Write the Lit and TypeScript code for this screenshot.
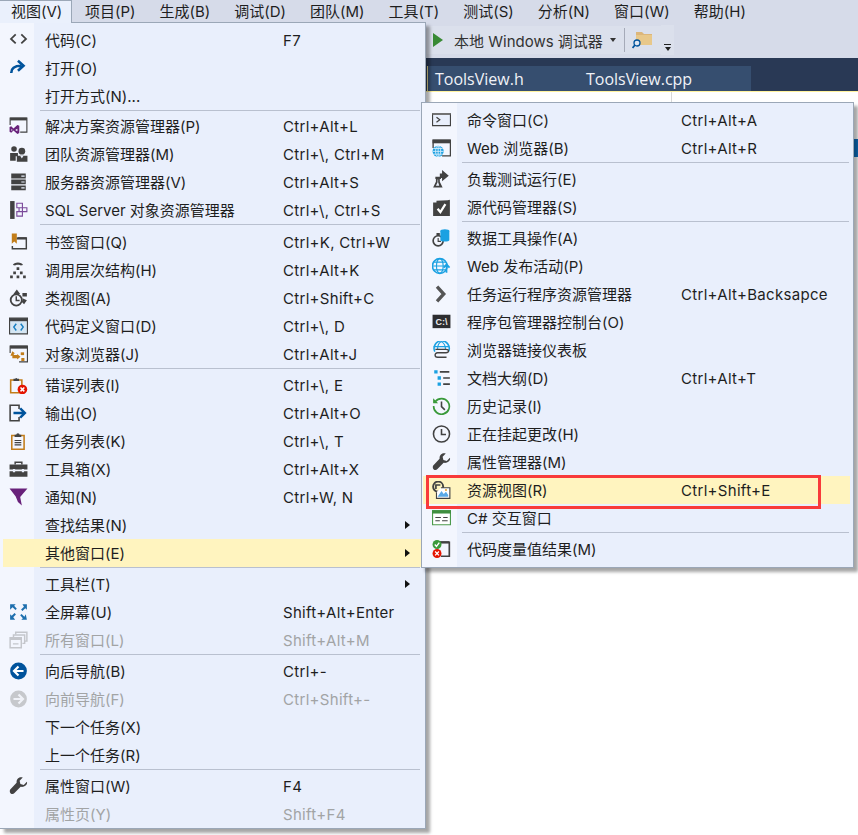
import { LitElement, html, css, svg, nothing } from "lit";
import { customElement } from "lit/decorators.js";

const G = "#424242";
const icons: Record<string, any> = {
  code: svg`<path d="M6 3 1.800 7 6 11M11 3l4.200 4L11 11" fill="none" stroke="${G}" stroke-width="1.600"/>`,
  open: svg`<path d="M2 12.500C2 8 5 6 11 6M8 1.500l5 4.500-5 4.500" fill="none" stroke="#00539c" stroke-width="2.300"/>`,
  sln: svg`<path d="M1 7V1h15v12.500h-6" fill="none" stroke="${G}" stroke-width="1"/><path d="M1 .5h15v2.500H1z" fill="${G}"/><path d="M.5 9 2 8.200l2 2 3.500-3.200 1.700.8v6.500l-1.700.8L4 12l-2 2-1.500-.8zm1.700 1.500v2.200l1-1.100zm5.300 0-2 1.100 2 1.100z" fill="#68217a"/>`,
  team: svg`<circle cx="4.500" cy="3.500" r="2.500" fill="${G}"/><circle cx="11.500" cy="5.500" r="3" fill="${G}"/><path d="M1 7h7v3H6v4H1zM7 9.500h9.500V15H7z" fill="${G}"/><path d="M10 9.500h3l-1.500 2.500z" fill="#e9effc"/>`,
  server: svg`<path d="M2 .5h13v4.300H2zM2 5.800h13v4.300H2zM2 11.100h13v4.300H2z" fill="${G}"/><path d="M11 2.700h3M11 8h3M11 13.300h3" stroke="#e9effc"/>`,
  sql: svg`<path d="M1 0h4v16H1z" fill="${G}"/><path d="M7 2h5v4H7zM7 9.500h5v4H7zM12 6h4v3.500h-4zM9 6v3.500" fill="none" stroke="#7b4a9a"/>`,
  bookmark: svg`<path d="M2.500 .5h4.500v9L4.700 7.500 2.500 9.500z" fill="#c27d1a"/><path d="M8 4.500h7.500V14H3v-2.500" fill="none" stroke="${G}" stroke-width="1.300"/><path d="M7 3.800h8.500v2H7z" fill="${G}"/>`,
  hier: svg`<path d="M3.500 3.500C4 .5 12 .5 12.500 3.500l-2 .5c0-1-5-1-5 0z" fill="${G}"/><path d="M6.800 5.500h2.400v2.400H6.800zM3.800 9.300h2.400v2.400H3.800zM9.800 9.300h2.400v2.400H9.800zM1 13h2.400v2.400H1zM6.800 13h2.400v2.400H6.800zM12.600 13H15v2.400h-2.400z" fill="${G}"/>`,
  classv: svg`<circle cx="6.500" cy="9.800" r="5" fill="none" stroke="${G}" stroke-width="1.600"/><path d="M6.500 6.500v3.700h3" fill="none" stroke="${G}" stroke-width="1.300"/><path d="m4 4.500 3-4 3 4zM12 3.500h4v3.200h-4zM12.500 8.500l3.500 1.500-2.500 3.500-2-2z" fill="${G}"/>`,
  def: svg`<path d="M.5 1h16v14H.5z" fill="#d5e6f3" stroke="${G}"/><path d="M.5 1h16v2.700H.5z" fill="${G}"/><path d="M6.500 6 4.300 9l2.200 3M10.500 6l2.200 3-2.200 3" fill="none" stroke="#1a7fc1" stroke-width="1.300"/>`,
  obj: svg`<path d="M1 7V1h15.500v14H9" fill="none" stroke="${G}"/><path d="M1 .5h15.500v2.700H1z" fill="${G}"/><path d="m3 5.500 2.500 2H4.300V9h3V8l3 2.500-3 2.500v-1.300H3V9.500H1.300zM11 11.500h2.800v2.800H11z" fill="#c27d1a"/><path d="M10.500 6.500h3v2.500h-3z" fill="#c27d1a"/>`,
  errlist: svg`<path d="M1.500 3.500h10v11.500h-10z" fill="none" stroke="#c27d1a" stroke-width="1.400"/><path d="M4 4.500V2.500h1.500a1.200 1.200 0 0 1 2 0H9v2z" fill="${G}"/><circle cx="12" cy="12" r="4.300" fill="#e41400"/><path d="m10.300 10.300 3.400 3.400m0-3.400-3.400 3.400" stroke="#fff" stroke-width="1.300"/>`,
  output: svg`<path d="M9 4.500V1H1v14h8v-3.500" fill="none" stroke="${G}" stroke-width="1.400"/><path d="M4 8h10M10 3.800 14.200 8 10 12.200" fill="none" stroke="#00539c" stroke-width="2.200"/>`,
  task: svg`<path d="M2.500 3h11v12.500h-11z" fill="none" stroke="#c27d1a" stroke-width="1.400"/><path d="M5 4.500V2.500h1.500a1.500 1.500 0 0 1 3 0H11v2z" fill="${G}"/><path d="M5 7.500h6M5 9.500h6M5 11.500h6" stroke="${G}"/>`,
  box: svg`<path d="M5.500 4V2h6v2" fill="none" stroke="${G}" stroke-width="1.300"/><path d="M.5 4h16v4.500H.5zM.5 10h16v5H.5z" fill="${G}"/><path d="M3.500 8h2v3h-2zM11.500 8h2v3h-2z" fill="#e9effc"/>`,
  filter: svg`<path d="M.5 .5h16L10 8l1.500 7.500L8 12.500 6 7.500z" fill="#68217a"/>`,
  full: svg`<path d="M1 1h5L4.600 2.400 7 5 5.800 6.200 3.200 3.800 1.800 5.200 1 6zM16 1v5l-1.400-1.400L12 7 10.800 5.800l2.600-2.600L12 1zM1 15v-5l1.400 1.400L5 9l1.200 1.200-2.400 2.600L5.500 15zM16 15h-5l1.400-1.400L10 11l1.200-1.200 2.600 2.400L15 10z" fill="#1d6fae"/>`,
  allwin: svg`<g fill="none" stroke="#c4c6cb" stroke-width="1.300"><path d="M6 3V1h10v8h-2"/><path d="M4 6V3.500h10V11h-2"/><path d="M1 6h10v9H1z"/></g><path d="M1 6h10v2H1zM3.500 11h5v1h-5z" fill="#c4c6cb"/>`,
  back: svg`<circle cx="8.500" cy="8" r="7.500" fill="#00539c"/><path d="M8.500 4 4.500 8l4 4M5 8h8" fill="none" stroke="#fff" stroke-width="2"/>`,
  fwd: svg`<circle cx="8.500" cy="8" r="7.500" fill="#c6c8cc"/><path d="m8.500 4 4 4-4 4M12 8H4" fill="none" stroke="#f0f2f8" stroke-width="2"/>`,
  wrench: svg`<path d="M16 4.200 13.200 7l-3-.8-.7-3L12.300.5C9.500 -.4 6.500 1.500 6.800 5.200L1.300 11c-1.300 1.500-.3 3.800 1.200 4.200 1 .2 1.700-.2 2.400-.9l5.500-5.600c3.700.7 6.500-2 5.600-4.500z" fill="${G}"/>`,
  cmd: svg`<path d="M.5 2.500h16v10.500H.5z" fill="#e9effc" stroke="${G}"/><path d="M.5 2h16v1.500H.5z" fill="#737373"/><path d="m4 5.500 3 2.300-3 2.300" fill="none" stroke="${G}" stroke-width="1.100"/>`,
  web: svg`<path d="M1 8V1h15.500v14H9" fill="none" stroke="${G}" stroke-width="1.200"/><path d="M.5 .5h16v3.300H.5z" fill="${G}"/><circle cx="5.500" cy="11" r="5" fill="#1ba1e2"/><path d="M.5 11h10M5.500 6v10M1.500 8.500h8M1.500 13.500h8" stroke="#d8ecfa" stroke-width=".8" fill="none"/><ellipse cx="5.500" cy="11" rx="2.300" ry="5" fill="none" stroke="#d8ecfa" stroke-width=".8"/>`,
  load: svg`<path d="M9 0 15 5l-6 5V7H7V3h2z" fill="${G}"/><path d="M3 6h5v2H7v2.500l2.500 5H1l2.500-5V8H3z" fill="${G}"/><path d="M5 8.500v2.500l-1.500 3h3L5.500 11V8.500z" fill="#e9effc"/>`,
  src: svg`<path d="M1 4h3V2.500L14 2l2-.5V16H1z" fill="${G}"/><path d="M5 9.500 7.500 12.500 12 5.500" fill="none" stroke="#fff" stroke-width="2"/>`,
  data: svg`<circle cx="5.500" cy="10.500" r="4.500" fill="none" stroke="${G}" stroke-width="1.500"/><path d="M5.500 8v3h2.500" fill="none" stroke="${G}"/><path d="M4 3.500h3V6H4z" fill="${G}"/><path d="M7.500 1.500h8V10c0 1.500-8 1.500-8 0z" fill="#1ba1e2"/><ellipse cx="11.500" cy="1.700" rx="4" ry="1.500" fill="#1ba1e2"/>`,
  pub: svg`<circle cx="7" cy="8" r="6.600" fill="none" stroke="#1ba1e2" stroke-width="1.400"/><ellipse cx="7" cy="8" rx="3" ry="6.600" fill="none" stroke="#1ba1e2"/><path d="M0 8h14M1.500 4.500h11M1.500 11.500h11" stroke="#1ba1e2"/><path d="M13 14V7.500M10.500 9.500l2.500-3 2.700 3" fill="none" stroke="#1ba1e2" stroke-width="1.500"/>`,
  chev: svg`<path d="m4.500 1.500 6 6.500-6 6.500" fill="none" stroke="#555" stroke-width="3"/>`,
  con: svg`<path d="M.5 1.500h16v12H.5z" fill="#2d2d30"/><text x="8.500" y="10.500" font-size="8" font-weight="700" font-family="Liberation Sans" fill="#eee" text-anchor="middle">C:\\</text>`,
  link: svg`<path d="M2.500 9.500a6.800 6.800 0 1 1 12.500-.5" fill="none" stroke="#1ba1e2" stroke-width="1.400"/><path d="M5 7c0-3 1.500-5.500 3.500-6.500C11 2 12 4.500 12 7M1.500 5h13.500" fill="none" stroke="#1ba1e2"/><path d="M3 7.500h9.500c3 0 3 3 0 3H5c-3 0-3 4 0 4h8" fill="none" stroke="#424242" stroke-width="1.200"/>`,
  outline: svg`<path d="M2 1h3v3H2zM5 6.500h3v3H5zM5 12h3v3H5z" fill="#1ba1e2"/><path d="M7 2.500h8.500M10 8h6M10 13.500h6" stroke="${G}" stroke-width="1.500"/>`,
  hist: svg`<path d="M3 4A7 7 0 1 1 1.500 8" fill="none" stroke="#3a9a3a" stroke-width="1.500"/><path d="M1 1v4.500h4.500z" fill="#3a9a3a"/><path d="M8.500 4v4.500l3 3" fill="none" stroke="${G}" stroke-width="1.400"/>`,
  clock: svg`<circle cx="8.500" cy="8" r="7.200" fill="none" stroke="${G}" stroke-width="1.400"/><path d="M8.500 3.500V8.500h4" fill="none" stroke="${G}" stroke-width="1.400"/>`,
  res: svg`<circle cx="5.500" cy="5" r="4.500" fill="none" stroke="${G}" stroke-width="1.700"/><path d="M3.500 7V3.500h4" fill="none" stroke="${G}" stroke-width="1.500"/><path d="M8 6h8v9.500H4V10" fill="#fff" stroke="${G}"/><path d="m5 14 3.500-5 2 2.500 2-2 2 3v1.500z" fill="#5aa9e6"/><circle cx="12.500" cy="8" r="1" fill="#e7a83c"/>`,
  csharp: svg`<path d="M.5 1.500h16v12.500H.5z" fill="#fff" stroke="#4c9a4c"/><path d="M0 1h17v3H0z" fill="#3f8f3f"/><path d="M3 7.500h5M10 7.500h4M3 10.500h4M9 10.500h5" stroke="${G}"/>`,
  metric: svg`<path d="M6 2h9.500v12.500H8" fill="none" stroke="${G}" stroke-width="1.500"/><path d="M6 1h9.500v2H6z" fill="${G}"/><circle cx="4.500" cy="4" r="4" fill="#3a9a3a"/><path d="m2.500 4 1.500 1.700 2.500-3.500" fill="none" stroke="#fff" stroke-width="1.200"/><circle cx="4.500" cy="12" r="4" fill="#e41400"/><path d="m2.800 10.300 3.400 3.400m0-3.400-3.400 3.400" stroke="#fff" stroke-width="1.200"/>`,
};

type Row = { t: string; k?: string; i?: string; d?: boolean; a?: boolean; h?: boolean } | "-";

const mainMenu: Row[] = [
  { t: "代码(C)", k: "F7", i: "code" },
  { t: "打开(O)", i: "open" },
  { t: "打开方式(N)..." },
  "-",
  { t: "解决方案资源管理器(P)", k: "Ctrl+Alt+L", i: "sln" },
  { t: "团队资源管理器(M)", k: "Ctrl+\\, Ctrl+M", i: "team" },
  { t: "服务器资源管理器(V)", k: "Ctrl+Alt+S", i: "server" },
  { t: "SQL Server 对象资源管理器", k: "Ctrl+\\, Ctrl+S", i: "sql" },
  "-",
  { t: "书签窗口(Q)", k: "Ctrl+K, Ctrl+W", i: "bookmark" },
  { t: "调用层次结构(H)", k: "Ctrl+Alt+K", i: "hier" },
  { t: "类视图(A)", k: "Ctrl+Shift+C", i: "classv" },
  { t: "代码定义窗口(D)", k: "Ctrl+\\, D", i: "def" },
  { t: "对象浏览器(J)", k: "Ctrl+Alt+J", i: "obj" },
  "-",
  { t: "错误列表(I)", k: "Ctrl+\\, E", i: "errlist" },
  { t: "输出(O)", k: "Ctrl+Alt+O", i: "output" },
  { t: "任务列表(K)", k: "Ctrl+\\, T", i: "task" },
  { t: "工具箱(X)", k: "Ctrl+Alt+X", i: "box" },
  { t: "通知(N)", k: "Ctrl+W, N", i: "filter" },
  { t: "查找结果(N)", a: true },
  { t: "其他窗口(E)", a: true, h: true },
  "-",
  { t: "工具栏(T)", a: true },
  { t: "全屏幕(U)", k: "Shift+Alt+Enter", i: "full" },
  { t: "所有窗口(L)", k: "Shift+Alt+M", i: "allwin", d: true },
  "-",
  { t: "向后导航(B)", k: "Ctrl+-", i: "back" },
  { t: "向前导航(F)", k: "Ctrl+Shift+-", i: "fwd", d: true },
  { t: "下一个任务(X)" },
  { t: "上一个任务(R)" },
  "-",
  { t: "属性窗口(W)", k: "F4", i: "wrench" },
  { t: "属性页(Y)", k: "Shift+F4", d: true },
];

const subMenu: Row[] = [
  { t: "命令窗口(C)", k: "Ctrl+Alt+A", i: "cmd" },
  { t: "Web 浏览器(B)", k: "Ctrl+Alt+R", i: "web" },
  "-",
  { t: "负载测试运行(E)", i: "load" },
  { t: "源代码管理器(S)", i: "src" },
  "-",
  { t: "数据工具操作(A)", i: "data" },
  { t: "Web 发布活动(P)", i: "pub" },
  { t: "任务运行程序资源管理器", k: "Ctrl+Alt+Backsapce", i: "chev" },
  { t: "程序包管理器控制台(O)", i: "con" },
  { t: "浏览器链接仪表板", i: "link" },
  { t: "文档大纲(D)", k: "Ctrl+Alt+T", i: "outline" },
  { t: "历史记录(I)", i: "hist" },
  { t: "正在挂起更改(H)", i: "clock" },
  { t: "属性管理器(M)", i: "wrench" },
  { t: "资源视图(R)", k: "Ctrl+Shift+E", i: "res", h: true },
  { t: "C# 交互窗口", i: "csharp" },
  "-",
  { t: "代码度量值结果(M)", i: "metric" },
];

const bar = ["视图(V)", "项目(P)", "生成(B)", "调试(D)", "团队(M)", "工具(T)", "测试(S)", "分析(N)", "窗口(W)", "帮助(H)"];

const row = (r: Row) =>
  r === "-"
    ? html`<div class="sep"></div>`
    : html`<div class="row ${r.h ? "hi" : ""} ${r.d ? "dis" : ""}">
        <span class="ic">${r.i ? html`<svg width="19" height="18" viewBox="0 0 17 16">${icons[r.i]}</svg>` : nothing}</span>
        <span class="lb">${r.t}</span>
        <span class="key">${r.k ?? ""}</span>
        ${r.a ? html`<span class="arrow"></span>` : nothing}
      </div>`;

@customElement("app-root")
export class AppRoot extends LitElement {
  static styles = css`
    :host {
      display: block;
      position: relative;
      width: 858px;
      height: 835px;
      overflow: hidden;
      background: #fff;
      font-family: "Inter", "Noto Sans CJK SC", sans-serif;
      font-size: 15px;
      color: #1e1e1e;
    }
    .menubar {
      display: flex;
      height: 23px;
      background: #d6dbe9;
      line-height: 23px;
    }
    .mi {
      padding: 0 12px;
      white-space: nowrap;
    }
    .mi.on {
      width: 50px;
      padding: 0 11px;
      margin-right: 1px;
      background: #eaf0fc;
      box-shadow: inset 0 1px 0 #9ba7b7, inset -1px 0 0 #9ba7b7;
    }
    .toolbar {
      height: 35px;
      background: #d6dbe9;
      display: flex;
      align-items: flex-start;
      padding-left: 427px;
    }
    .tb-main {
      margin-top: 3px;
      width: 234px;
      height: 28px;
      background: #dbe0ec;
      display: flex;
      align-items: center;
    }
    .play {
      margin-left: 6px;
      width: 0;
      height: 0;
      border-left: 10px solid #388a34;
      border-top: 7px solid transparent;
      border-bottom: 7px solid transparent;
    }
    .cfg {
      margin-left: 11px;
      width: 150px;
      white-space: nowrap;
      color: #333;
    }
    .caret {
      margin-left: 6px;
      border-top: 4px solid #333;
      border-left: 3.500px solid transparent;
      border-right: 3.500px solid transparent;
    }
    .vsep {
      margin-left: 8px;
      width: 1px;
      height: 24px;
      background: #a5aab8;
    }
    .folder {
      margin-left: 7px;
      display: block;
    }
    .tb-over {
      margin-top: 2px;
      width: 13px;
      height: 30px;
      background: #dbe0ec;
      display: flex;
      flex-direction: column;
      align-items: center;
      justify-content: flex-end;
      padding-bottom: 4px;
      box-sizing: border-box;
    }
    .tb-over i {
      display: block;
      width: 7px;
      height: 1px;
      background: #222;
      margin-bottom: 2px;
    }
    .tb-over b {
      display: block;
      border-top: 4px solid #222;
      border-left: 3.500px solid transparent;
      border-right: 3.500px solid transparent;
    }
    .docband {
      height: 34px;
      background: #293955;
      padding: 8px 0 0 427px;
      box-sizing: border-box;
      border-bottom: 1px solid #fff29d;
    }
    .tabs {
      width: 324px;
      height: 25px;
      background: #364e6f;
      display: flex;
      color: #f0f2f7;
      font-family: "Open Sans", sans-serif;
      font-size: 16px;
      line-height: 27px;
      padding-left: 7px;
      box-sizing: border-box;
      border-left: 1px solid #e8d98f;
    }
    .tabs span:first-child {
      width: 151px;
    }
    .editor {
      position: relative;
      height: 743px;
    }
    .vline {
      position: absolute;
      left: 671px;
      top: 0;
      width: 1px;
      height: 10px;
      background: #d8d8d8;
    }
    .sel {
      position: absolute;
      right: 0;
      top: 47px;
      width: 6px;
      height: 18px;
      background: #0e70c0;
    }
    .menu {
      position: absolute;
      box-sizing: border-box;
      background: linear-gradient(to right, #f3f6fe var(--g), #e9effc var(--g));
      border: 1px solid #9ba7b7;
      box-shadow: 4px 4px 3px rgba(0, 0, 0, 0.35);
    }
    .main {
      --g: 34px;
      left: 0;
      top: 22px;
      width: 426px;
      height: 807px;
      padding: 3px 4px 0 3px;
      border-left: 0;
    }
    .main::before {
      content: "";
      position: absolute;
      left: 0;
      top: -1px;
      width: 71px;
      height: 1px;
      background: #eaf0fc;
    }
    .sub {
      --g: 35px;
      left: 421px;
      top: 102px;
      width: 433px;
      height: 466px;
      padding: 3px 3px 0 1px;
    }
    .row {
      display: flex;
      align-items: center;
      height: 28px;
      white-space: nowrap;
      position: relative;
    }
    .ic {
      flex: none;
      display: flex;
      justify-content: center;
      box-sizing: border-box;
    }
    .main .ic {
      width: 31px;
    }
    .sub .ic {
      width: 33px;
      padding-left: 4px;
    }
    .ic svg {
      display: block;
    }
    .lb {
      margin-left: 11px;
      margin-bottom: 2px;
    }
    .main .lb {
      width: 238px;
    }
    .sub .lb {
      width: 214px;
    }
    .key {
      letter-spacing: 0.3px;
    }
    .dis .lb,
    .dis .key {
      color: #a2a4a5;
    }
    .hi {
      background: #fff4bf;
    }
    .arrow {
      position: absolute;
      right: 11px;
      top: 10px;
      border-left: 5px solid #111;
      border-top: 4.500px solid transparent;
      border-bottom: 4.500px solid transparent;
    }
    .sep {
      height: 2px;
      margin: 0 1px 1px 37px;
      border-top: 1px solid #b9c0cf;
      box-sizing: border-box;
    }
    .sub .sep {
      margin: 0 1px 1px 39px;
    }
    .main .sep:nth-child(4) {
      margin-bottom: 0;
    }
    .main .sep:nth-child(9) {
      margin-bottom: 2px;
    }
    .mark {
      position: absolute;
      left: 426px;
      top: 475px;
      width: 395px;
      height: 34px;
      box-sizing: border-box;
      border: 3px solid #f83a3a;
    }
  `;

  render() {
    return html`
      <div class="menubar">
        ${bar.map((b, i) => html`<div class="mi ${i === 0 ? "on" : ""}">${b}</div>`)}
      </div>
      <div class="toolbar">
        <div class="tb-main">
          <span class="play"></span>
          <span class="cfg">本地 Windows 调试器</span>
          <span class="caret"></span>
          <span class="vsep"></span>
          <svg class="folder" width="21" height="18" viewBox="0 0 21 18">
            <path d="M4 1h6l2 2h8v11H4z" fill="#dcb67a" />
            <path d="M4 4h16v10H4z" fill="#e8c88a" />
            <circle cx="5" cy="12" r="3" fill="#dfe6f2" stroke="#00539c" stroke-width="1.300" />
            <path d="M3 14 .5 17" stroke="#00539c" stroke-width="1.800" />
          </svg>
        </div>
        <div class="tb-over"><i></i><b></b></div>
      </div>
      <div class="docband">
        <div class="tabs"><span>ToolsView.h</span><span>ToolsView.cpp</span></div>
      </div>
      <div class="editor"><div class="vline"></div><div class="sel"></div></div>
      <div class="menu main">${mainMenu.map(row)}</div>
      <div class="menu sub">${subMenu.map(row)}</div>
      <div class="mark"></div>
    `;
  }
}
